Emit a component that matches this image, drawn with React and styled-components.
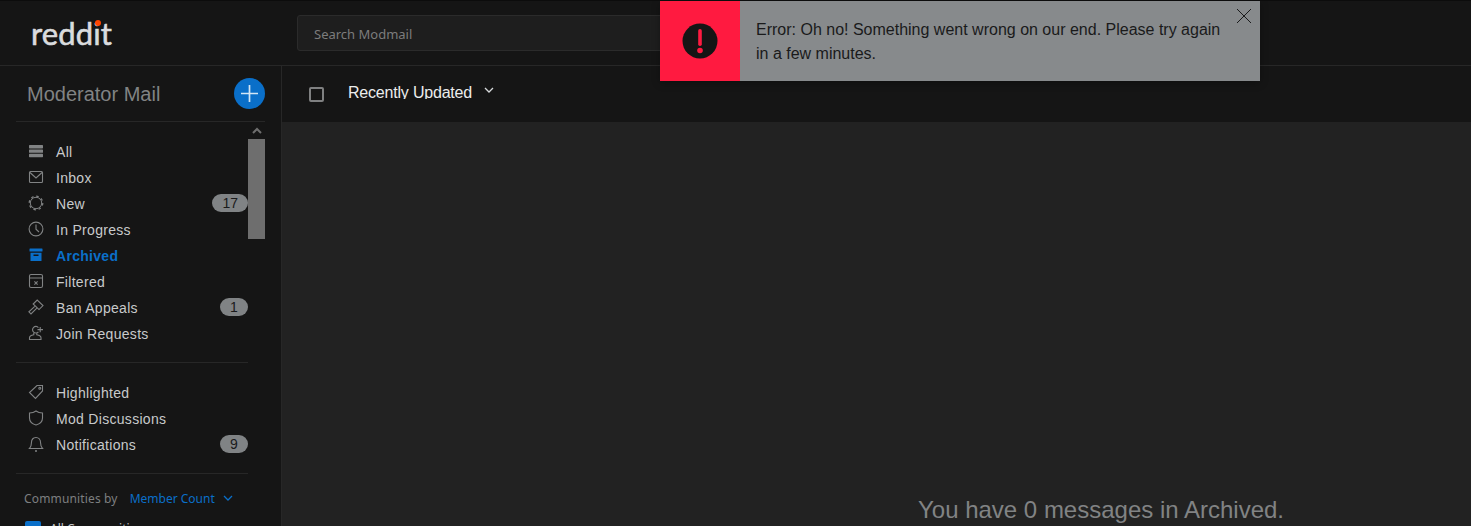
import styled, { createGlobalStyle } from "styled-components";

const Global = createGlobalStyle`
  html, body {
    margin: 0;
    padding: 0;
    background: #151515;
    overflow: hidden;
  }
  * {
    box-sizing: border-box;
  }
`;

const ARIAL = `"Liberation Sans", Arial, sans-serif`;
const NOTO = `"Noto Sans", Arial, sans-serif`;

const Page = styled.div`
  position: relative;
  width: 100%;
  height: 526px;
  overflow: hidden;
  display: flex;
  flex-direction: column;
  border-top: 1px solid #0c0c0c;
  background: #151515;
  font-family: ${ARIAL};
`;

const TopBar = styled.header`
  flex: 0 0 65px;
  display: flex;
  align-items: center;
  border-bottom: 1px solid #272727;
`;

const LogoBox = styled.div`
  position: relative;
  width: 297px;
  padding-left: 31px;
`;

const LogoText = styled.span`
  font-family: "Lato", "Noto Sans", sans-serif;
  font-size: 31px;
  font-weight: 400;
  line-height: 34px;
  letter-spacing: 0.1px;
  color: #dadcde;
  -webkit-text-stroke: 0.6px #dadcde;
`;

const LogoDot = styled.i`
  position: absolute;
  left: 95px;
  top: 4px;
  width: 6px;
  height: 6px;
  border-radius: 50%;
  background: #ff4500;
`;

const Search = styled.div`
  width: 700px;
  height: 36px;
  padding: 2px 0 0 16px;
  display: flex;
  align-items: center;
  background: #1e1e1e;
  border: 1px solid #2b2b2b;
  border-radius: 3px;
  font-family: ${NOTO};
  font-size: 13px;
  color: #7c7c7c;
`;

const Columns = styled.div`
  flex: 1;
  min-height: 0;
  display: flex;
`;

const Sidebar = styled.aside`
  flex: 0 0 282px;
  padding: 0 16px;
  display: flex;
  flex-direction: column;
  border-right: 1px solid #272727;
  overflow: hidden;
`;

const SideHead = styled.div`
  flex: 0 0 56px;
  display: flex;
  align-items: center;
  justify-content: space-between;
  padding: 0 0 0 11px;
  border-bottom: 1px solid #272727;
`;

const SideTitle = styled.h1`
  margin: 2px 0 0;
  font-size: 20px;
  font-weight: 400;
  color: #818384;
`;

const AddButton = styled.button`
  width: 31px;
  height: 31px;
  padding: 0;
  border: 0;
  border-radius: 50%;
  background: #0a6fc9;
  display: flex;
  align-items: center;
  justify-content: center;
`;

const SideBody = styled.div`
  flex: 1;
  display: flex;
  min-height: 0;
`;

const NavColumn = styled.div`
  flex: 1;
  min-width: 0;
`;

const Rail = styled.div`
  flex: 0 0 17px;
  display: flex;
  flex-direction: column;
  align-items: center;
`;

const RailArrow = styled.div`
  flex: 0 0 17px;
  display: flex;
  align-items: center;
  justify-content: center;
`;

const RailThumb = styled.div`
  width: 100%;
  height: 100px;
  background: #6e6e6e;
`;

const NavGroup = styled.nav`
  padding: 16px 0;
  border-bottom: 1px solid #272727;
`;

const NavRow = styled.div`
  height: 26px;
  padding-left: 12px;
  display: flex;
  align-items: center;
  gap: 12px;
  font-size: 14px;
  letter-spacing: 0.3px;
  color: ${(p) => (p.$active ? "#0a6fc9" : "#c8cacb")};
  font-weight: ${(p) => (p.$active ? 700 : 400)};
`;

const NavLabel = styled.span`
  flex: 1;
  padding-top: 2px;
`;

const Badge = styled.span`
  min-width: 28px;
  height: 18px;
  padding: 0 10px;
  border-radius: 9px;
  background: #808385;
  color: #1a1a1b;
  font-size: 14px;
  letter-spacing: 0;
  line-height: 18px;
  text-align: center;
`;

const SortRow = styled.div`
  padding: 16px 0 0 8px;
  display: flex;
  align-items: center;
  font-family: ${NOTO};
  font-size: 12px;
  letter-spacing: 0.15px;
  color: #7d7f80;
`;

const SortValue = styled.span`
  margin-left: 12px;
  margin-right: 8px;
  letter-spacing: 0;
  color: #0a6fc9;
`;

const CommunityRow = styled.div`
  margin-top: 13px;
  padding-left: 9px;
  display: flex;
  align-items: center;
  gap: 9px;
  font-family: ${NOTO};
  font-size: 12px;
  color: #c8cacb;
`;

const CommunityCheck = styled.span`
  width: 16px;
  height: 16px;
  border-radius: 2px;
  background: #0a6fc9;
`;

const Content = styled.main`
  flex: 1;
  min-width: 0;
  display: flex;
  flex-direction: column;
`;

const Toolbar = styled.div`
  flex: 0 0 56px;
  padding: 0 0 2px 27px;
  display: flex;
  align-items: center;
`;

const CheckBox = styled.span`
  width: 15px;
  height: 15px;
  margin-top: 2px;
  border: 2px solid #7f8081;
  border-radius: 2px;
`;

const SortLabel = styled.div`
  margin: -3px 0 0 24px;
  height: 14px;
  overflow: hidden;
  font-size: 16px;
  line-height: 16px;
  letter-spacing: -0.2px;
  color: #eceded;
`;

const Caret = styled.span`
  margin-left: 12px;
  margin-top: -5px;
  display: flex;
`;

const Empty = styled.div`
  flex: 1;
  padding: 373px 187px 0 0;
  background: #222222;
  display: flex;
  justify-content: flex-end;
  font-size: 24px;
  line-height: 30px;
  color: #818384;
`;

const Toast = styled.div`
  position: absolute;
  left: 660px;
  top: 0;
  width: 600px;
  height: 80px;
  display: flex;
  background: #878a8c;
  box-shadow: 0 2px 8px rgba(0, 0, 0, 0.3);
`;

const ToastIcon = styled.div`
  flex: 0 0 80px;
  background: #ff1a40;
  display: flex;
  align-items: center;
  justify-content: center;
`;

const ToastText = styled.p`
  margin: 0;
  width: 484px;
  padding: 17px 0 0 16px;
  font-size: 16px;
  line-height: 24px;
  color: #1a1a1b;
`;

const ToastClose = styled.button`
  position: absolute;
  right: 8px;
  top: 7px;
  width: 16px;
  height: 16px;
  padding: 0;
  border: 0;
  background: none;
  display: flex;
`;

const Ico = ({ children, fill = "none", color = "#818384" }) => (
  <svg width="16" height="16" viewBox="0 0 16 16" fill={fill} stroke={fill === "none" ? color : "none"} strokeWidth="1.1" style={{ flex: "none" }}>
    {children}
  </svg>
);

const icons = {
  all: (
    <Ico fill="#818384">
      <rect x="1" y="2" width="14" height="3.4" rx="0.6" />
      <rect x="1" y="6.4" width="14" height="3.4" rx="0.6" />
      <rect x="1" y="10.8" width="14" height="3.4" rx="0.6" />
    </Ico>
  ),
  inbox: (
    <Ico>
      <rect x="1.5" y="2.5" width="13" height="11" rx="1" />
      <path d="M2 3.5 L8 9 L14 3.5" />
    </Ico>
  ),
  fresh: (
    <Ico>
      <circle cx="8" cy="8" r="5.7" strokeWidth="1" />
      <circle cx="8" cy="8" r="6.8" strokeWidth="1.2" strokeDasharray="2.6 2.74" />
    </Ico>
  ),
  clock: (
    <Ico>
      <circle cx="8" cy="8" r="6.9" />
      <path d="M8 3.5 V8.2 L11 11" />
    </Ico>
  ),
  archive: (
    <Ico fill="#0a6fc9">
      <rect x="1.5" y="1.5" width="13" height="3" rx="0.5" />
      <path d="M2.5 5.8 H13.5 V14 H2.5 Z M5.5 7.6 V9 H10.5 V7.6 Z" fillRule="evenodd" />
    </Ico>
  ),
  filtered: (
    <Ico>
      <rect x="1.5" y="1.5" width="13" height="13" rx="1.6" />
      <path d="M1.5 5 H14.5 M6.4 8.4 L9.6 11.6 M9.6 8.4 L6.4 11.6" />
    </Ico>
  ),
  gavel: (
    <Ico>
      <path d="M5.2 5 L9.2 1 L15 6.6 L11 10.6 Z" />
      <path d="M6.8 7.4 L0.9 12.8 L3 15 L8.8 9.2" />
    </Ico>
  ),
  join: (
    <Ico>
      <path d="M10.4 2.6 A3.3 3.3 0 1 0 10.4 6.8 M5.8 8 V9.8 C3.2 10.3 1.5 11.2 1.5 12.8 V14.5 H13 V12.8 C13 11.2 11.3 10.3 8.8 9.8 V8 M9.5 4.6 H15 M12.2 2 V7.2" />
    </Ico>
  ),
  tag: (
    <Ico>
      <path d="M9 1.5 H14.5 V7 L7.5 14.5 L1.5 8.5 Z" />
      <circle cx="11.8" cy="4.2" r="1" />
    </Ico>
  ),
  shield: (
    <Ico>
      <path d="M8 1 C10 2.5 12 3 14.5 3 V8 C14.5 11.5 11.5 14 8 15 C4.5 14 1.5 11.5 1.5 8 V3 C4 3 6 2.5 8 1 Z" />
    </Ico>
  ),
  bell: (
    <Ico>
      <path d="M1.5 12.5 H14.5 C13 11 12.6 9.5 12.6 7 C12.6 3.5 10.5 1.5 8 1.5 C5.5 1.5 3.4 3.5 3.4 7 C3.4 9.5 3 11 1.5 12.5 Z" />
      <path d="M7 15 H9" strokeWidth="1.4" />
    </Ico>
  ),
};

const mainLinks = [
  { icon: "all", label: "All" },
  { icon: "inbox", label: "Inbox" },
  { icon: "fresh", label: "New", count: 17 },
  { icon: "clock", label: "In Progress" },
  { icon: "archive", label: "Archived", active: true },
  { icon: "filtered", label: "Filtered" },
  { icon: "gavel", label: "Ban Appeals", count: 1 },
  { icon: "join", label: "Join Requests" },
];

const otherLinks = [
  { icon: "tag", label: "Highlighted" },
  { icon: "shield", label: "Mod Discussions" },
  { icon: "bell", label: "Notifications", count: 9 },
];

const Links = ({ items }) =>
  items.map((item) => (
    <NavRow key={item.label} $active={item.active}>
      {icons[item.icon]}
      <NavLabel>{item.label}</NavLabel>
      {item.count != null && <Badge>{item.count}</Badge>}
    </NavRow>
  ));

export default function App() {
  return (
    <Page>
      <Global />
      <TopBar>
        <LogoBox>
          <LogoText>reddit</LogoText>
          <LogoDot />
        </LogoBox>
        <Search>Search Modmail</Search>
      </TopBar>
      <Columns>
        <Sidebar>
          <SideHead>
            <SideTitle>Moderator Mail</SideTitle>
            <AddButton aria-label="New message">
              <svg width="19" height="19" viewBox="0 0 19 19" stroke="#d4e6f5" strokeWidth="1.7">
                <path d="M9.5 1 V18 M1 9.5 H18" />
              </svg>
            </AddButton>
          </SideHead>
          <SideBody>
            <NavColumn>
              <NavGroup>
                <Links items={mainLinks} />
              </NavGroup>
              <NavGroup>
                <Links items={otherLinks} />
              </NavGroup>
              <SortRow>
                Communities by
                <SortValue>Member Count</SortValue>
                <svg width="10" height="7" viewBox="0 0 10 7" fill="none" stroke="#0a6fc9" strokeWidth="1.3">
                  <path d="M1 1 L5 5 L9 1" />
                </svg>
              </SortRow>
              <CommunityRow>
                <CommunityCheck />
                All Communities
              </CommunityRow>
            </NavColumn>
            <Rail>
              <RailArrow>
                <svg width="10" height="7" viewBox="0 0 10 7" fill="none" stroke="#6e6e6e" strokeWidth="2">
                  <path d="M1 6 L5 2 L9 6" />
                </svg>
              </RailArrow>
              <RailThumb />
            </Rail>
          </SideBody>
        </Sidebar>
        <Content>
          <Toolbar>
            <CheckBox />
            <SortLabel>Recently Updated</SortLabel>
            <Caret>
              <svg width="10" height="7" viewBox="0 0 10 7" fill="none" stroke="#d7dadc" strokeWidth="1.3">
                <path d="M1 1 L5 5 L9 1" />
              </svg>
            </Caret>
          </Toolbar>
          <Empty>You have 0 messages in Archived.</Empty>
        </Content>
      </Columns>
      <Toast>
        <ToastIcon>
          <svg width="36" height="36" viewBox="0 0 36 36">
            <circle cx="18" cy="18" r="17.5" fill="#151515" />
            <rect x="16.2" y="6" width="3.6" height="17" rx="1.8" fill="#ff1a40" />
            <circle cx="18" cy="27.5" r="2.8" fill="#ff1a40" />
          </svg>
        </ToastIcon>
        <ToastText>Error: Oh no! Something went wrong on our end. Please try again in a few minutes.</ToastText>
        <ToastClose aria-label="Close">
          <svg width="16" height="16" viewBox="0 0 16 16" stroke="#1a1a1b" strokeWidth="1">
            <path d="M1 1 L15 15 M15 1 L1 15" />
          </svg>
        </ToastClose>
      </Toast>
    </Page>
  );
}
